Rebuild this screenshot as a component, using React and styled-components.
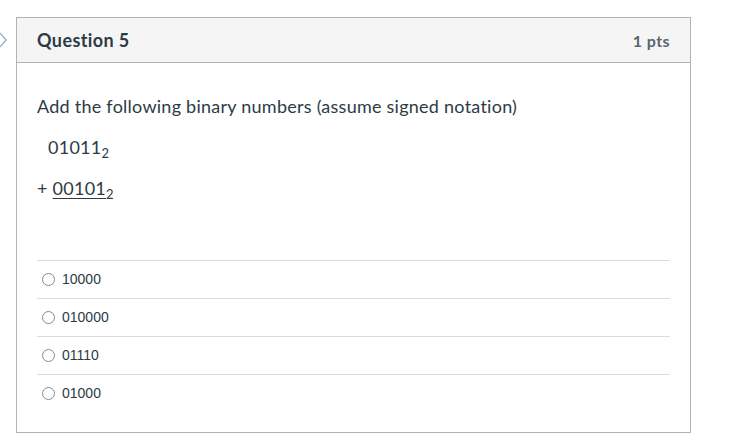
import React from 'react';
import styled, { createGlobalStyle } from 'styled-components';

const GlobalStyle = createGlobalStyle`
    html, body {
        margin: 0;
        padding: 0;
        background: #fff;
    }
    body {
        font-family: Lato, 'Liberation Sans', sans-serif;
        color: #2d3b45;
    }
`;

const Page = styled.div`
    width: 733px;
    height: 446px;
    padding-top: 17px;
    box-sizing: border-box;
    display: flex;
    align-items: flex-start;
`;

const FlagSlot = styled.div`
    width: 16px;
    padding-top: 15px;
    display: flex;
    flex-shrink: 0;
`;

const Card = styled.div`
    width: 675px;
    height: 416px;
    box-sizing: border-box;
    border: 1px solid #b3b3b3;
    display: flex;
    flex-direction: column;
`;

const Header = styled.div`
    height: 44px;
    background: #f5f5f5;
    border-bottom: 1px solid #b3b3b3;
    display: flex;
    align-items: center;
    justify-content: space-between;
    padding: 0 20px;
`;

const Title = styled.h2`
    margin: 0;
    font: 700 18px Lato, sans-serif;
    letter-spacing: 0.4px;
    color: #2d3b45;
`;

const Points = styled.span`
    font: 700 16px Lato, sans-serif;
    letter-spacing: 0.4px;
    color: #5b6670;
`;

const Body = styled.div`
    padding: 30px 20px 0;
`;

const Text = styled.p`
    margin: 0 0 14px;
    font: 400 18px/27px Lato, sans-serif;
    letter-spacing: 0.25px;
    color: #2d3b45;
    padding-left: ${(p) => p.$indent || 0}px;

    sub {
        font-size: 0.72em;
        line-height: 0;
        vertical-align: -0.3em;
    }
`;

const Under = styled.span`
    text-decoration: underline;
    text-underline-offset: 3px;
    text-decoration-thickness: 1px;
`;

const Answers = styled.ul`
    list-style: none;
    margin: 58px 0 0;
    padding: 0;
`;

const Answer = styled.li`
    height: 38px;
    border-top: 1px solid #dcdcdc;
    box-sizing: border-box;
    display: flex;
    align-items: center;
    gap: 7px;
    padding: 0 0 1px 5px;
`;

const Radio = styled.span`
    width: 11px;
    height: 11px;
    border: 1px solid #8a8a8a;
    border-radius: 50%;
    background: #fff;
    flex-shrink: 0;
`;

const Label = styled.span`
    font: 400 14px Arial, 'Liberation Sans', sans-serif;
    color: #2d3b45;
`;

const options = ['10000', '010000', '01110', '01000'];

const App = () => {
    return (
        <>
            <GlobalStyle />
            <Page>
                <FlagSlot>
                    <svg width="8" height="16" viewBox="0 0 8 16">
                        <path d="M0 1 L6 8 L0 15" fill="none" stroke="#9fb2c4" strokeWidth="1.4" />
                    </svg>
                </FlagSlot>
                <Card>
                    <Header>
                        <Title>Question 5</Title>
                        <Points>1 pts</Points>
                    </Header>
                    <Body>
                        <Text>Add the following binary numbers (assume signed notation)</Text>
                        <Text $indent={11}>
                            01011<sub>2</sub>
                        </Text>
                        <Text>
                            +{' '}
                            <Under>
                                00101<sub>2</sub>
                            </Under>
                        </Text>
                        <Answers>
                            {options.map((o) => (
                                <Answer key={o}>
                                    <Radio />
                                    <Label>{o}</Label>
                                </Answer>
                            ))}
                        </Answers>
                    </Body>
                </Card>
            </Page>
        </>
    );
};

export default App;
